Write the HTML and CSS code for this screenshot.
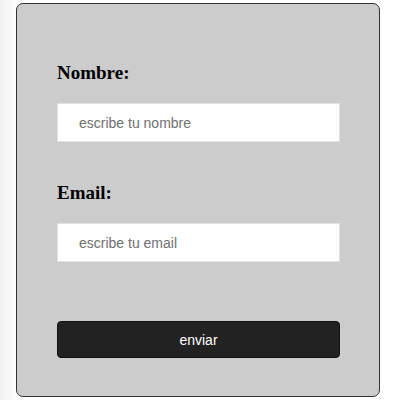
FILE: index.html
```html
<!DOCTYPE html>
<html lang="es">
<head>
<meta charset="utf-8">
<title>Formulario</title>
<link rel="stylesheet" href="styles.css">
</head>
<body>
<form class="card">
  <label class="label label-first" for="nombre">Nombre:</label>
  <input class="field" id="nombre" type="text" placeholder="escribe tu nombre">
  <label class="label label-next" for="email">Email:</label>
  <input class="field" id="email" type="email" placeholder="escribe tu email">
  <button class="submit" type="button">enviar</button>
</form>
</body>
</html>
```
FILE: styles.css
```css
html {
  background: #ffffff;
}
body {
  margin: 0;
  padding: 3px 0 0 16px;
  background: linear-gradient(to right, #f1f1f1 0, #fbfbfb 14px, #ffffff 16px);
  height: 400px;
  box-sizing: border-box;
}
.card {
  box-sizing: border-box;
  width: 364px;
  height: 394px;
  border: 1px solid #333333;
  border-radius: 7px;
  background: #cccccc;
  padding: 0 39px 0 40px;
  display: flex;
  flex-direction: column;
}
.label {
  font-family: "Liberation Serif", "Times New Roman", serif;
  font-weight: bold;
  font-size: 19px;
  line-height: 22px;
  color: #000000;
  margin-bottom: 19px;
}
.label-first {
  margin-top: 58px;
}
.label-next {
  margin-top: 40px;
}
.field {
  box-sizing: border-box;
  width: 283px;
  height: 39px;
  margin: 0;
  border: 1px solid #e2e2e2;
  background: #ffffff;
  padding: 0 0 0 21px;
  font-family: "Liberation Sans", Arial, sans-serif;
  font-size: 14px;
  color: #333333;
  outline: none;
}
.field::placeholder {
  color: #707070;
}
.submit {
  box-sizing: border-box;
  width: 283px;
  height: 37px;
  margin-top: 59px;
  border: 1px solid #111111;
  border-radius: 4px;
  background: #222222;
  color: #ffffff;
  font-family: "Liberation Sans", Arial, sans-serif;
  font-size: 14px;
  padding: 0;
}
```
